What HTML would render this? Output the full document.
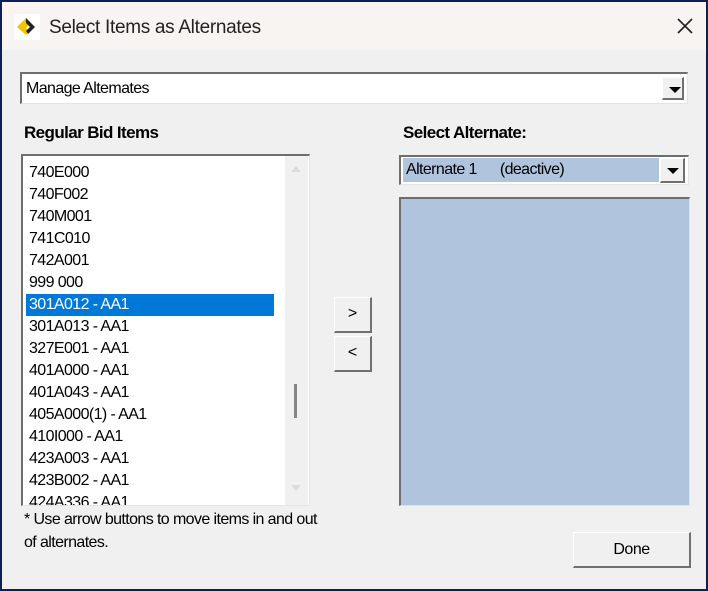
<!DOCTYPE html><html><head><style>
*{margin:0;padding:0;box-sizing:border-box}
body{width:708px;height:591px;background:#fff;font-family:"Liberation Sans",sans-serif;color:#000;overflow:hidden;position:relative}
.frame{position:absolute;left:0;top:0;width:708px;height:591px;background:#f0f0f0}
.border{position:absolute;left:0;top:0;width:708px;height:591px;border:2px solid #0d2050}
.title{position:absolute;left:0;top:0;width:708px;height:50px;background:#f8f4f1}
.a{position:absolute;white-space:nowrap;font-size:16px;letter-spacing:-0.6px}
.sunk{position:absolute;border-top:2px solid #6e6e6e;border-left:2px solid #6e6e6e;border-right:1px solid #e3e3e3;border-bottom:1px solid #e3e3e3}
.btn{position:absolute;background:#f0f0f0;border-top:1px solid #fff;border-left:1px solid #fff;border-right:2px solid #707070;border-bottom:2px solid #707070;text-align:center;font-size:16px}
.dd{position:absolute;background:#f0f0f0;border-right:2px solid #707070;border-bottom:2px solid #707070;border-top:1px solid #fff;border-left:1px solid #fff}
.dd:after{content:"";position:absolute;left:6px;top:9px;border-left:6px solid transparent;border-right:6px solid transparent;border-top:6px solid #000}
.row{height:22px;line-height:22px;padding-left:3px}
</style></head><body>
<div class="frame">
<div class="title"></div>
<svg style="position:absolute;left:14px;top:14px" width="26" height="26" viewBox="0 0 26 26"><rect width="26" height="26" fill="#fff"/><path d="M3 13 L12 4 L17 9 L12 14 L15 17 L12 21 Z" fill="#f5c400"/><path d="M12 4 L21 13 L14 20 L12 17 L16 13 L12 9 Z" fill="#222"/></svg>
<div class="a" style="left:49px;top:17px;font-size:19px;letter-spacing:-0.3px;color:#222">Select Items as Alternates</div>
<svg style="position:absolute;left:676px;top:17px" width="18" height="18"><path d="M2 2L16 16M16 2L2 16" stroke="#222" stroke-width="1.6"/></svg>

<div class="sunk" style="left:20px;top:72px;width:668px;height:32px;background:#fff"></div>
<div class="a" style="left:26px;top:80px">Manage Altemates</div>
<div class="dd" style="left:662px;top:77px;width:22px;height:23px"></div>

<div class="a" style="left:24px;top:123px;font-weight:bold;font-size:17px">Regular Bid Items</div>
<div class="a" style="left:403px;top:123px;font-weight:bold;font-size:17px">Select Alternate:</div>

<div class="sunk" style="left:21px;top:154px;width:289px;height:352px;background:#fff;overflow:hidden">
<div style="position:absolute;left:3px;top:6px;width:248px;font-size:16px;letter-spacing:-0.6px">
<div class="row">740E000</div><div class="row">740F002</div><div class="row">740M001</div><div class="row">741C010</div><div class="row">742A001</div><div class="row">999 000</div>
<div class="row" style="background:#0078d7;color:#fff">301A012 - AA1</div>
<div class="row">301A013 - AA1</div><div class="row">327E001 - AA1</div><div class="row">401A000 - AA1</div><div class="row">401A043 - AA1</div><div class="row">405A000(1) - AA1</div><div class="row">410I000 - AA1</div><div class="row">423A003 - AA1</div><div class="row">423B002 - AA1</div><div class="row">424A336 - AA1</div>
</div>
<div style="position:absolute;left:262px;top:0;width:23px;height:350px;background:#f0f0f0"></div>
<div style="position:absolute;left:268px;top:10px;border-left:5px solid transparent;border-right:5px solid transparent;border-bottom:6px solid #dcdcdc"></div>
<div style="position:absolute;left:268px;top:329px;border-left:5px solid transparent;border-right:5px solid transparent;border-top:6px solid #dcdcdc"></div>
<div style="position:absolute;left:271px;top:228px;width:3px;height:34px;background:#858585"></div>
</div>

<div class="btn" style="left:334px;top:297px;width:38px;height:36px;line-height:32px">&gt;</div>
<div class="btn" style="left:334px;top:336px;width:38px;height:36px;line-height:32px">&lt;</div>

<div class="sunk" style="left:399px;top:155px;width:290px;height:30px;background:#fff"></div>
<div style="position:absolute;left:403px;top:158px;width:256px;height:24px;background:#b0c4de"></div>
<div class="a" style="left:406px;top:161px">Alternate 1&nbsp;&nbsp;&nbsp;&nbsp;&nbsp;&nbsp;(deactive)</div>
<div class="dd" style="left:660px;top:158px;width:25px;height:25px"></div>

<div class="sunk" style="left:399px;top:197px;width:291px;height:309px;background:#b0c4de"></div>

<div class="a" style="left:24px;top:511px">* Use arrow buttons to move items in and out</div>
<div class="a" style="left:24px;top:534px">of alternates.</div>
<div class="btn" style="left:573px;top:532px;width:118px;height:36px;line-height:33px;letter-spacing:-0.5px">Done</div>
</div>
<div class="border"></div>
</body></html>
